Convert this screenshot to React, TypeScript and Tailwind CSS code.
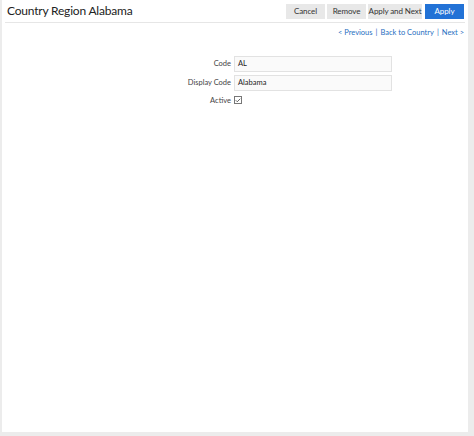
import { Check } from "lucide-react";

const FONT = "font-['Lato',_'Liberation_Sans',_sans-serif]";

export default function App() {
  return (
    <div className={`${FONT} flex h-[436px] w-[474px] bg-[#ececec] pb-[4px] pl-[2px] pr-[6px]`}>
      <div className="flex flex-1 flex-col bg-white px-[3px]">
        {/* header */}
        <div className="flex h-[23px] items-center justify-between border-b border-[#e6e6e6] pl-[2px] pr-[1px]">
          <h1 className="text-[12px] leading-none tracking-[-0.2px] text-[#222]">Country Region Alabama</h1>
          <div className="flex items-center gap-[2px] whitespace-nowrap text-[8px] leading-none tracking-[-0.1px]">
            <button className="h-[15px] w-[39px] bg-[#e8e8e8] text-[#333]">Cancel</button>
            <button className="h-[15px] w-[39px] bg-[#e8e8e8] text-[#333]">Remove</button>
            <button className="h-[15px] w-[54px] bg-[#e8e8e8] text-[#333]">Apply and Next</button>
            <button className="ml-[1px] h-[15px] w-[39px] bg-[#2272d6] text-white">Apply</button>
          </div>
        </div>

        {/* pager */}
        <div className="mt-[6px] flex justify-end pr-[1px] text-[7.5px] leading-none text-[#1f6fbf]">
          <span>&lt; Previous</span>
          <span className="px-[3px]">|</span>
          <span>Back to Country</span>
          <span className="px-[3px]">|</span>
          <span>Next &gt;</span>
        </div>

        {/* form */}
        <div className="mt-[19px] grid grid-cols-[226px_158px] items-center gap-x-[3px] gap-y-[3px] text-[7.5px] text-[#444]">
          <span className="text-right">Code</span>
          <div className="flex h-[16px] items-center border border-[#e2e2e2] bg-[#fafafa] px-[3px] text-[#222]">AL</div>
          <span className="text-right">Display Code</span>
          <div className="flex h-[16px] items-center border border-[#e2e2e2] bg-[#fafafa] px-[3px] text-[#222]">Alabama</div>
          <span className="mt-[1px] text-right">Active</span>
          <div className="mt-[1px] flex">
            <span className="flex h-[8px] w-[8px] items-center justify-center border border-[#777]">
              <Check className="h-[7px] w-[7px] text-[#333]" strokeWidth={3} />
            </span>
          </div>
        </div>
      </div>
    </div>
  );
}
